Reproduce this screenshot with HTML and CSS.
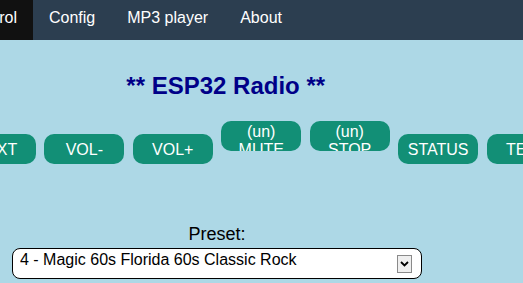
FILE: index.html
```html
<!DOCTYPE html>
<html lang="en">
<head>
<meta charset="utf-8">
<title>ESP32 Radio</title>
<link rel="stylesheet" href="styles.css">
</head>
<body>
<nav class="topnav">
  <ul class="menu">
    <li><a class="menu-link active" href="#">Control</a></li>
    <li><a class="menu-link" href="#">Config</a></li>
    <li><a class="menu-link" href="#">MP3 player</a></li>
    <li><a class="menu-link" href="#">About</a></li>
  </ul>
</nav>
<main class="content">
  <h1 class="title">** ESP32 Radio **</h1>
  <div class="controls">
    <button class="btn" type="button"><span class="btn-label">PREV</span></button>
    <button class="btn" type="button"><span class="btn-label">NEXT</span></button>
    <button class="btn" type="button"><span class="btn-label">VOL-</span></button>
    <button class="btn" type="button"><span class="btn-label">VOL+</span></button>
    <button class="btn btn-two" type="button"><span class="btn-label">(un)<br>MUTE</span></button>
    <button class="btn btn-two" type="button"><span class="btn-label">(un)<br>STOP</span></button>
    <button class="btn" type="button"><span class="btn-label">STATUS</span></button>
    <button class="btn" type="button"><span class="btn-label">TEST</span></button>
  </div>
  <label class="preset-label" for="preset">Preset:</label>
  <div class="select-wrap">
    <select id="preset" class="select">
      <option>4 - Magic 60s Florida 60s Classic Rock</option>
    </select>
    <span class="select-arrow" aria-hidden="true">
      <svg class="chevron" width="9" height="6" viewBox="0 0 9 6"><polyline points="1,1 4.5,4.5 8,1" fill="none" stroke="#000" stroke-width="1.8"/></svg>
    </span>
  </div>
</main>
</body>
</html>
```

FILE: styles.css
```css
html, body {
  margin: 0;
  padding: 0;
}

body {
  background: #add8e6;
  font-family: "Liberation Sans", Arial, sans-serif;
  overflow: hidden;
  width: 523px;
  height: 283px;
}

.topnav {
  background: #2c3e50;
  height: 40px;
}

.menu {
  list-style: none;
  margin: 0 0 0 -50.6px;
  padding: 0;
  display: flex;
}

.menu-link {
  display: block;
  color: #fff;
  text-decoration: none;
  font-size: 16px;
  line-height: 18px;
  padding: 8.5px 16px 13.5px;
}

.menu-link.active {
  background: #111;
}

.content {
  width: 720px;
  margin-left: -143px;
  display: flex;
  flex-direction: column;
  align-items: center;
}

.title {
  margin: 31.5px 0 0;
  padding-left: 17.4px;
  font-size: 24px;
  line-height: 28px;
  font-weight: bold;
  color: #000088;
}

.controls {
  display: flex;
  align-items: flex-start;
  gap: 8.45px;
  margin-top: 21.5px;
}

.btn {
  width: 80px;
  height: 30px;
  box-sizing: border-box;
  margin: 13px 0 0;
  padding: 6.5px 0 0;
  border: none;
  border-radius: 10px;
  background: #128f76;
  color: #fff;
  font: 16px/18px "Liberation Sans", Arial, sans-serif;
  text-align: center;
  overflow: hidden;
  display: flex;
  flex-direction: column;
  justify-content: flex-start;
  align-items: center;
}

.btn-two {
  margin-top: 0;
  padding-top: 1.5px;
}

.btn-label {
  display: block;
}

.preset-label {
  display: block;
  margin-top: 60.25px;
  font-size: 18px;
  line-height: 21px;
  color: #000;
}

.select-wrap {
  position: relative;
  margin-top: 2.75px;
  width: 409.4px;
  height: 31px;
}

.select {
  appearance: none;
  -webkit-appearance: none;
  display: block;
  width: 100%;
  height: 31px;
  box-sizing: border-box;
  margin: 0;
  padding: 2px 0 9px 6.7px;
  border: 1px solid #000;
  border-radius: 8px;
  background: #fff;
  color: #000;
  font: 16px/18px "Liberation Sans", Arial, sans-serif;
}

.select-arrow {
  position: absolute;
  left: 385px;
  top: 7px;
  width: 15px;
  height: 18px;
  box-sizing: border-box;
  border: 1px solid #8a8a8a;
  background: #efefef;
  display: flex;
  align-items: center;
  justify-content: center;
  pointer-events: none;
}

.chevron {
  display: block;
}
```
